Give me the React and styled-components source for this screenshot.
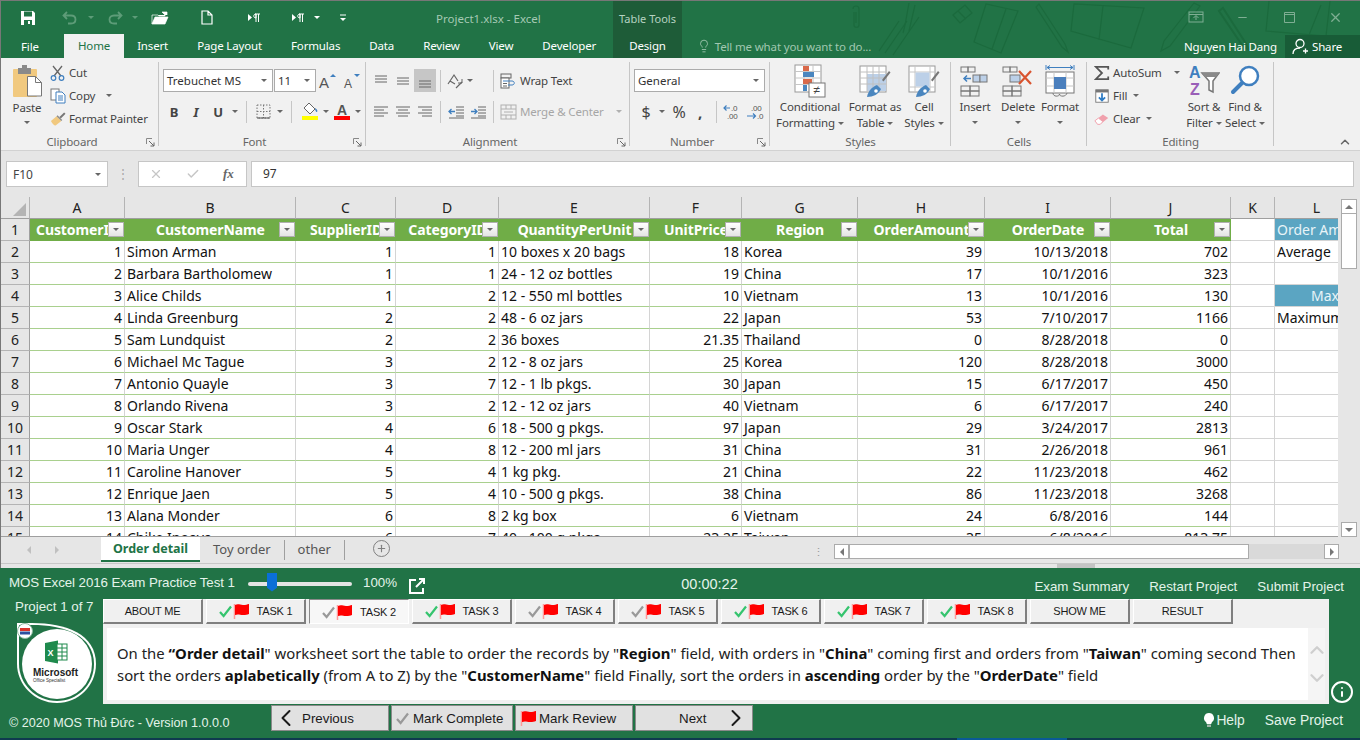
import React from "react";
import styled, { createGlobalStyle, css } from "styled-components";
import { X, Check, Minus, ChevronLeft, ChevronRight, ChevronUp, ChevronDown, Plus, Lightbulb, Info } from "lucide-react";

const UI = `"Noto Sans", "Open Sans", sans-serif`;
const CELL = `"Noto Sans", "Open Sans", sans-serif`;
const APPFONT = `"Liberation Sans", Arial, sans-serif`;

const Global = createGlobalStyle`
  html, body { margin: 0; padding: 0; background: #217346; overflow: hidden; }
  * { box-sizing: border-box; }
`;

const Page = styled.div`
  width: 1360px;
  height: 740px;
  display: flex;
  flex-direction: column;
  overflow: hidden;
  font-family: ${UI};
`;
const Excel = styled.div`
  height: 568px;
  display: flex;
  flex-direction: column;
  border-top: 1px solid #777;
  border-left: 1px solid #777;
  background: #e6e6e6;
`;

/* title bar + tabs */
const Head = styled.header`
  position: relative;
  background: #217346;
  height: 57px;
  flex: none;
`;
const Doodles = styled.svg`
  position: absolute;
  left: 829px;
  top: 0;
  pointer-events: none;
`;
const TitleRow = styled.div`
  height: 33px;
  display: flex;
  align-items: stretch;
  position: relative;
`;
const Quick = styled.div`
  width: 379px;
  display: flex;
  align-items: center;
`;
const QuickBtn = styled.span`
  width: 20px;
  flex: none;
  margin-left: ${(p) => p.$ml}px;
  display: flex;
  justify-content: center;
  align-items: center;
  color: ${(p) => (p.$dim ? "#5d9c78" : "#fff")};
`;
const DocName = styled.div`
  width: 233px;
  padding-left: 56px;
  color: #a5c9b4;
  font-size: 11.5px;
  line-height: 36px;
  white-space: nowrap;
`;
const ContextTitle = styled.div`
  width: 69px;
  background: #1e5c38;
  color: #b5d2c1;
  font-size: 11px;
  line-height: 36px;
  text-align: center;
`;
const WinBtns = styled.div`
  margin-left: auto;
  display: flex;
  align-items: center;
  padding-right: 1px;
  color: #7fae93;
`;
const WinBtn = styled.span`
  width: 46.5px;
  display: flex;
  justify-content: center;
`;
const TabRow = styled.nav`
  height: 24px;
  display: flex;
  align-items: stretch;
  position: relative;
  font-size: 11.5px;
  letter-spacing: -0.15px;
`;
const FileTab = styled.div`
  width: 63px;
  padding-left: 20px;
  color: #fff;
  line-height: 26px;
`;
const RibbonTab = styled.div`
  padding: 0 ${(p) => (p.$active ? 14 : 14.5)}px;
  margin-right: ${(p) => (p.$active ? -1.5 : 0)}px;
  line-height: 24px;
  white-space: nowrap;
  color: ${(p) => (p.$active ? "#217346" : "#fff")};
  background: ${(p) => (p.$active ? "#f1f1f1" : "transparent")};
`;
const ContextTab = styled.div`
  position: absolute;
  left: 612px;
  top: 0;
  bottom: 0;
  width: 69px;
  background: #1e5c38;
  color: #fff;
  line-height: 24px;
  text-align: center;
`;
const TellMe = styled.div`
  display: flex;
  align-items: center;
  gap: 4px;
  margin-left: 86px;
  color: #a0c7b0;
  white-space: nowrap;
`;
const TabRight = styled.div`
  margin-left: auto;
  display: flex;
  align-items: center;
`;
const UserName = styled.span`
  color: #fff;
  margin-right: 8px;
`;
const ShareBtn = styled.div`
  width: 75px;
  height: 23px;
  background: #185c37;
  color: #fff;
  display: flex;
  align-items: center;
  gap: 3px;
  padding-left: 7px;
`;

/* ribbon */
const Ribbon = styled.div`
  height: 93px;
  flex: none;
  display: flex;
  background: #f1f1f1;
  border-bottom: 1px solid #d2d2d2;
  position: relative;
  color: #444;
  font-size: 11.5px;
  letter-spacing: -0.15px;
`;
const Group = styled.section`
  width: ${(p) => p.$w}px;
  flex: none;
  display: flex;
  flex-direction: column;
  position: relative;
  &::after {
    content: "";
    position: absolute;
    right: 0;
    top: 4px;
    bottom: 4px;
    width: 1px;
    background: #c6c6c6;
  }
`;
const GroupBody = styled.div`
  flex: 1;
  min-height: 0;
  display: flex;
`;
const GroupLabel = styled.div`
  height: 16px;
  line-height: 16px;
  text-align: center;
  color: #666;
  padding-right: ${(p) => (p.$launcher ? 16 : 0)}px;
`;
const Launcher = styled.svg`
  position: absolute;
  right: 4px;
  bottom: 3px;
`;
const Caret = styled.i`
  display: inline-block;
  width: 0;
  height: 0;
  border-left: 3px solid transparent;
  border-right: 3px solid transparent;
  border-top: 3px solid ${(p) => p.$c || "#666"};
  margin-left: ${(p) => p.$ml ?? 3}px;
  vertical-align: middle;
  flex: none;
`;
const PasteBtn = styled.div`
  width: 42px;
  margin-left: 5px;
  padding-top: 7px;
  display: flex;
  flex-direction: column;
  align-items: center;
  line-height: 16px;
  & > svg { flex: none; margin-bottom: 2px; }
  & > i { margin-top: 5px; }
`;
const SmallStack = styled.div`
  padding-top: 3px;
  margin-left: ${(p) => p.$ml ?? 2}px;
  width: ${(p) => (p.$w ? `${p.$w}px` : "auto")};
  flex: none;
  display: flex;
  flex-direction: column;
`;
const SmallAction = styled.div`
  height: 23px;
  display: flex;
  align-items: center;
  gap: 3px;
  white-space: nowrap;
  color: ${(p) => (p.$off ? "#a6a6a6" : "inherit")};
  & > svg { flex: none; }
`;
const TwoRows = styled.div`
  padding-top: 11px;
  display: flex;
  flex-direction: column;
  gap: 8px;
  width: 100%;
`;
const ToolRow = styled.div`
  height: 23px;
  display: flex;
  align-items: center;
  padding-left: ${(p) => p.$pl || 0}px;
`;
const FieldBox = styled.div`
  width: ${(p) => p.$w}px;
  height: 23px;
  background: #fff;
  border: 1px solid #ababab;
  margin-right: 1px;
  flex: none;
  display: flex;
  align-items: center;
  justify-content: space-between;
  padding: 0 5px 0 3px;
  letter-spacing: 0;
  color: #333;
  white-space: nowrap;
  overflow: hidden;
`;
const Tool = styled.span`
  width: ${(p) => p.$w || 22}px;
  height: 23px;
  flex: none;
  margin-left: ${(p) => p.$ml || 0}px;
  display: inline-flex;
  align-items: center;
  justify-content: center;
  color: #444;
  background: ${(p) => (p.$on ? "#c6c6c6" : "transparent")};
  font-weight: ${(p) => (p.$bold ? 700 : 400)};
  font-style: ${(p) => (p.$ital ? "italic" : "normal")};
  font-size: ${(p) => p.$fs || 13}px;
`;
const ToolSep = styled.span`
  width: 1px;
  height: 22px;
  background: #c6c6c6;
  flex: none;
  margin-left: ${(p) => p.$l ?? 4}px;
  margin-right: ${(p) => p.$r ?? 4}px;
`;
const BigBtn = styled.div`
  width: ${(p) => p.$w}px;
  margin-left: ${(p) => p.$ml || 0}px;
  flex: none;
  display: flex;
  flex-direction: column;
  align-items: center;
  padding-top: 6px;
  line-height: 16px;
  text-align: center;
  white-space: nowrap;
  & > svg { flex: none; margin-bottom: 1px; }
  & > i { margin-top: 6px; }
`;
const Collapse = styled.span`
  position: absolute;
  right: 8px;
  bottom: 1px;
  color: #666;
  display: flex;
`;

/* formula bar */
const FormulaBar = styled.div`
  height: 46px;
  flex: none;
  display: flex;
  align-items: center;
  padding: 0 5px;
  background: #e6e6e6;
`;
const NameBox = styled.div`
  width: 102px;
  height: 26px;
  background: #fff;
  border: 1px solid #c6c6c6;
  display: flex;
  align-items: center;
  justify-content: space-between;
  padding: 0 6px;
  font-size: 12px;
  color: #444;
`;
const Grip = styled.span`
  width: 30px;
  text-align: center;
  color: #a6a6a6;
  font-size: 12px;
  line-height: 8px;
`;
const FxBox = styled.div`
  width: 109px;
  height: 26px;
  background: #fff;
  border: 1px solid #c6c6c6;
  display: flex;
  align-items: center;
  gap: 23px;
  padding-left: 10px;
  color: #c6c6c6;
`;
const FxGlyph = styled.span`
  font-family: "Liberation Serif", serif;
  font-style: italic;
  font-weight: 700;
  font-size: 13px;
  color: #666;
`;
const FormulaInput = styled.div`
  width: 1103px;
  height: 26px;
  margin-left: 4px;
  background: #fff;
  border: 1px solid #c6c6c6;
  padding-left: 11px;
  line-height: 24px;
  font-size: 12px;
  color: #333;
`;

/* sheet */
const SheetArea = styled.div`
  height: 340px;
  flex: none;
  display: flex;
`;
const Sheet = styled.div`
  width: 1337px;
  overflow: hidden;
  background: #fff;
  border-bottom: 1px solid #9f9f9f;
  font-family: ${CELL};
  font-size: 14px;
  color: #111;
`;
const COLS = "29px 95px 171px 100px 103px 151px 92px 116px 127px 126px 120px 44px 84px";
const Row = styled.div`
  display: grid;
  grid-template-columns: ${COLS};
  height: 22px;
`;
const ColHead = styled.div`
  background: #e6e6e6;
  border-right: 1px solid #b4b4b4;
  border-bottom: 1px solid #9f9f9f;
  text-align: center;
  line-height: 21px;
  color: #222;
  position: relative;
`;
const CornerMark = styled.i`
  position: absolute;
  right: 3px;
  bottom: 2px;
  width: 0;
  height: 0;
  border-left: 13px solid transparent;
  border-bottom: 13px solid #b4b4b4;
`;
const RowHead = styled.div`
  background: #e6e6e6;
  border-right: 1px solid #9f9f9f;
  border-bottom: 1px solid #b4b4b4;
  text-align: center;
  line-height: 21px;
  color: #222;
`;
const Cell = styled.div`
  border-right: 1px solid #d4d4d4;
  border-bottom: 1px solid ${(p) => (p.$plain ? "#d4d4d4" : "#a9d08e")};
  padding: 0 2px;
  line-height: 21px;
  white-space: nowrap;
  overflow: hidden;
  text-align: ${(p) => (p.$num ? "right" : "left")};
`;
const TableHead = styled.div`
  position: relative;
  background: #70ad47;
  color: #fff;
  font-weight: 700;
  letter-spacing: -0.1px;
  line-height: 21px;
  white-space: nowrap;
  overflow: hidden;
  display: flex;
  justify-content: center;
`;
const FilterBtn = styled.span`
  position: absolute;
  right: 1px;
  top: 3px;
  width: 16px;
  height: 15px;
  background: linear-gradient(#fff, #e4e4e4);
  border: 1px solid #b0b0b0;
  display: flex;
  align-items: center;
  justify-content: center;
`;
const NoteHead = styled.div`
  background: #5ba5c2;
  color: #e8f4f8;
  line-height: 21px;
  border-bottom: 1px solid #d4d4d4;
  white-space: nowrap;
  overflow: hidden;
  padding-left: ${(p) => p.$pl || 2}px;
`;
const VScroll = styled.div`
  width: 22px;
  padding: 2px 1px 0 3px;
  display: flex;
  flex-direction: column;
  background: #e6e6e6;
`;
const ScrollArrow = styled.div`
  width: 16px;
  height: 15px;
  background: #fff;
  border: 1px solid #ababab;
  display: flex;
  align-items: center;
  justify-content: center;
  flex: none;
`;
const ScrollThumb = styled.div`
  width: 16px;
  height: 55px;
  background: #fff;
  border: 1px solid #ababab;
  border-top: 0;
`;
const ScrollRest = styled.div`
  flex: 1;
`;
const Triangle = styled.i`
  width: 0;
  height: 0;
  ${(p) => p.$dir === "up" && css`border-left: 4px solid transparent; border-right: 4px solid transparent; border-bottom: 4px solid #777;`}
  ${(p) => p.$dir === "down" && css`border-left: 4px solid transparent; border-right: 4px solid transparent; border-top: 4px solid #777;`}
  ${(p) => p.$dir === "left" && css`border-top: 4px solid transparent; border-bottom: 4px solid transparent; border-right: 4px solid ${p.$c || "#777"};`}
  ${(p) => p.$dir === "right" && css`border-top: 4px solid transparent; border-bottom: 4px solid transparent; border-left: 4px solid ${p.$c || "#777"};`}
`;

/* sheet tabs */
const SheetTabs = styled.div`
  height: 27px;
  flex: none;
  display: flex;
  align-items: flex-start;
  background: #e6e6e6;
  border-bottom: 1px solid #c8c8c8;
  font-size: 13px;
  color: #555;
`;
const TabNav = styled.div`
  width: 100px;
  height: 25px;
  display: flex;
  align-items: center;
  gap: 24px;
  padding-left: 26px;
`;
const ActiveSheet = styled.div`
  width: 99px;
  height: 25px;
  background: #fff;
  border-bottom: 2px solid #217346;
  color: #217346;
  font-weight: 700;
  font-size: 12.5px;
  text-align: center;
  line-height: 23px;
`;
const SheetName = styled.div`
  height: 20px;
  margin-top: 3px;
  padding: 0 13px;
  line-height: 18px;
  border-right: 1px solid #9f9f9f;
`;
const AddSheet = styled.span`
  margin-left: 28px;
  margin-top: 3px;
  width: 17px;
  height: 17px;
  border: 1.5px solid #808080;
  border-radius: 50%;
  display: flex;
  align-items: center;
  justify-content: center;
  color: #808080;
`;
const HScroll = styled.div`
  margin-left: auto;
  width: 537px;
  height: 15px;
  margin-top: 7px;
  margin-right: 21px;
  display: flex;
  align-items: center;
  color: #888;
`;
const SplitDots = styled.span`
  width: 32px;
  text-align: center;
  font-size: 11px;
  line-height: 10px;
  color: #999;
`;
const HArrow = styled.div`
  width: 15px;
  height: 15px;
  background: #fff;
  border: 1px solid #ababab;
  display: flex;
  align-items: center;
  justify-content: center;
  flex: none;
`;
const HThumb = styled.div`
  width: 400px;
  height: 15px;
  background: #fff;
  border: 1px solid #ababab;
`;
const HTrack = styled.div`
  flex: 1;
  height: 15px;
  background: #d9d9d9;
`;
const SplitBar = styled.div`
  height: 4px;
  flex: none;
  background: #e6e6e6;
  display: flex;
  justify-content: flex-end;
  padding-right: 265px;
`;
const SplitHandle = styled.span`
  width: 38px;
  background: #c4c4c4;
`;

/* exam panel */
const Exam = styled.div`
  flex: 1;
  background: #217346;
  display: flex;
  flex-direction: column;
  color: #e4f3ea;
  font-family: ${APPFONT};
  font-size: 13.33px;
`;
const ExamTop = styled.div`
  height: 31px;
  flex: none;
  display: flex;
  align-items: center;
`;
const ExamTitle = styled.div`
  width: 248px;
  padding: 0 0 3px 9px;
  letter-spacing: -0.08px;
  white-space: nowrap;
`;
const Slider = styled.div`
  position: relative;
  width: 104px;
  height: 4px;
  background: #e4e4e4;
  border-radius: 2px;
`;
const SliderThumb = styled.span`
  position: absolute;
  left: 19px;
  top: -9px;
  width: 10px;
  height: 19px;
  background: #0a6fd8;
  clip-path: polygon(0 0, 100% 0, 100% 80%, 50% 100%, 0 80%);
`;
const Percent = styled.span`
  margin-left: 11px;
  width: 45px;
  padding-bottom: 3px;
`;
const PopOut = styled.svg`
  flex: none;
  margin-top: 4px;
`;
const Timer = styled.div`
  width: 567px;
  text-align: center;
  font-size: 14.5px;
`;
const ExamLinks = styled.div`
  margin-left: auto;
  display: flex;
  gap: 20px;
  padding-right: 16px;
  padding-top: 5px;
  white-space: nowrap;
`;
const ExamMain = styled.div`
  height: 105px;
  flex: none;
  display: flex;
`;
const LeftCol = styled.div`
  width: 103px;
  flex: none;
  padding-left: 15px;
  white-space: nowrap;
  line-height: 16px;
  & > svg { display: block; margin: 7px 0 0 1px; }
`;
const Panel = styled.div`
  width: 1226px;
  flex: none;
  background: #f0f0f0;
`;
const TaskRow = styled.div`
  display: flex;
  gap: 3px;
  height: 25px;
`;
const TaskBtn = styled.div`
  width: 100px;
  height: 25px;
  display: flex;
  align-items: center;
  justify-content: center;
  gap: ${(p) => (p.$icons ? 4 : 0)}px;
  font-size: 11px;
  letter-spacing: -0.2px;
  color: #1a1a1a;
  background: ${(p) => (p.$current ? "#f7f7f7" : "#f0f0f0")};
  border: 1px solid;
  border-color: #fff #7f7f7f #7f7f7f #fff;
  border-bottom-width: 2px;
  border-right-width: 2px;
  ${(p) => p.$current && css`
    border-color: #8a8a8a #fff #fff #8a8a8a;
    border-width: 1px;
    padding-top: 1px;
  `}
`;
const TaskIcons = styled.span`
  display: flex;
  align-items: center;
  gap: 1px;
  margin-right: 2px;
`;
const MsgWrap = styled.div`
  display: flex;
  margin: 4px 0 0 4px;
  height: 72px;
`;
const Msg = styled.div`
  width: 1201px;
  background: #fff;
  padding: 14px 0 0 10px;
  font-family: ${UI};
  font-size: 14.88px;
  line-height: 22px;
  color: #222;
  white-space: nowrap;
  b { font-weight: 700; color: #111; }
`;
const MsgScroll = styled.div`
  width: 17px;
  background: #f5f5f5;
  display: flex;
  flex-direction: column;
  align-items: center;
  padding-top: 11px;
  gap: 6px;
  color: #cfcfcf;
  & > svg { flex: none; }
`;
const InfoCol = styled.div`
  flex: 1;
  display: flex;
  align-items: flex-end;
  justify-content: center;
  padding-right: 5px;
  color: #fff;
`;
const ExamFoot = styled.div`
  height: 34px;
  flex: none;
  display: flex;
`;
const Copyright = styled.div`
  width: 271px;
  padding: 12px 0 0 9px;
  font-size: 12.6px;
  white-space: nowrap;
`;
const NavBtn = styled.div`
  width: ${(p) => p.$w}px;
  height: 26px;
  margin-top: 1px;
  margin-right: 2px;
  flex: none;
  display: flex;
  align-items: center;
  gap: ${(p) => p.$gap ?? 2}px;
  padding-left: ${(p) => p.$pl ?? 2}px;
  background: #e1e1e1;
  border: 1px solid #8a8a8a;
  color: #1a1a1a;
  white-space: nowrap;
  & > svg { flex: none; }
`;
const FootRight = styled.div`
  margin-left: auto;
  display: flex;
  gap: 20px;
  align-items: center;
  padding: 0 17px 2px 0;
  font-size: 13.8px;
  white-space: nowrap;
`;
const HelpLink = styled.span`
  display: flex;
  align-items: center;
  gap: 1px;
`;
const Strip = styled.div`
  height: 2px;
  flex: none;
  background: #0f3a4f;
  padding-left: 957px;
`;
const StripLit = styled.div`
  width: 110px;
  height: 2px;
  background: #0a5a96;
`;

/* drawn icons */
const Tiny = ({ w = 16, h = 16, vb, children, ...r }) => (
  <svg width={w} height={h} viewBox={vb || `0 0 ${w} ${h}`} fill="none" {...r}>{children}</svg>
);
const Flag = () => (
  <Tiny w={18} h={17}>
    <path d="M1.5 1v15" stroke="#ff9a9a" strokeWidth="1.5" />
    <path d="M2 2c3-1.6 5 0 8 0s4-.6 6-1v10c-2 .6-3 1-6 1s-5-1.4-8 0z" fill="#f00" />
  </Tiny>
);
const Tick = ({ grey }) => (
  <Tiny w={13} h={13}>
    <path d="M1 7l3.6 4L12 1.5" stroke={grey ? "#999" : "#35c46e"} strokeWidth="2.2" />
  </Tiny>
);
const PasteIcon = () => (
  <Tiny w={30} h={33}>
    <rect x="1" y="4" width="24" height="28" rx="1" fill="#f1c97f" />
    <rect x="6" y="3" width="13" height="6" fill="#8a8a8a" />
    <rect x="10" y="0" width="5" height="5" fill="#8a8a8a" />
    <path d="M15.5 11.5h8l6 6v13.5h-14z" fill="#fff" stroke="#777" />
    <path d="M23.5 11.5v6h6" stroke="#777" />
  </Tiny>
);
const CutIcon = () => (
  <Tiny w={16} h={16}>
    <path d="M3 1l8 10M12 1L4 11" stroke="#666" strokeWidth="1.3" />
    <circle cx="3.5" cy="13" r="2.3" stroke="#3f7fbf" strokeWidth="1.2" />
    <circle cx="11.5" cy="13" r="2.3" stroke="#3f7fbf" strokeWidth="1.2" />
  </Tiny>
);
const CopyIcon = () => (
  <Tiny w={16} h={16}>
    <rect x="1" y="1" width="8" height="11" fill="#fff" stroke="#777" />
    <path d="M6 4h6l3 3v8H6z" fill="#fff" stroke="#3f7fbf" />
    <path d="M8 8h5M8 10h5M8 12h5" stroke="#3f7fbf" />
  </Tiny>
);
const BrushIcon = () => (
  <Tiny w={16} h={16} vb="0 0 17 16">
    <path d="M1 10l6-5 5 5-6 5c-2-.2-4-3-5-5z" fill="#f1c97f" />
    <path d="M7 5l5 5 1-1-5-5z" fill="#8a8a8a" />
    <path d="M10 6l5-5 1.5 1.5-5 5z" fill="#777" />
  </Tiny>
);
const Lines = ({ rows }) => (
  <Tiny w={16} h={16}>
    {rows.map((r, i) => (
      <path key={i} d={`M${r[0]} ${r[2]}H${r[1]}`} stroke="#666" />
    ))}
  </Tiny>
);
const FillIcon = () => (
  <Tiny w={18} h={19}>
    <path d="M8 1l6 6-5 5-6-6z" fill="#fff" stroke="#666" />
    <path d="M14 6c2 1 3 3 2 4-1 .5-2-2-2-4z" fill="#3f7fbf" />
    <rect x="1" y="14" width="16" height="4" fill="#ff0" />
  </Tiny>
);
const FontColorIcon = () => (
  <Tiny w={16} h={19}>
    <text x="3" y="12.5" fontSize="14" fontFamily="Liberation Sans" fontWeight="700" fill="#555">A</text>
    <rect x="0" y="14" width="16" height="4" fill="#f00" />
  </Tiny>
);
const BorderIcon = () => (
  <Tiny w={15} h={15}>
    <path d="M1 1h13v13H1z" stroke="#777" strokeDasharray="1.5 1.5" />
    <path d="M7.5 1v13M1 7.5h13" stroke="#777" strokeDasharray="1.5 1.5" />
    <path d="M1 14h13" stroke="#555" />
  </Tiny>
);
const GrowA = ({ up }) => (
  <Tiny w={20} h={18}>
    <text x="1" y="16" fontSize={up ? 15 : 12} fontFamily="Liberation Sans" fill="#555">A</text>
    <path d={up ? "M12 5l3-3 3 3z" : "M11 2h6l-3 3z"} fill="#3f7fbf" />
  </Tiny>
);
const Orient = () => (
  <Tiny w={18} h={16}>
    <path d="M2 11L8 2l4 6M4 8l5 3M10 15l6-6" stroke="#666" strokeWidth="1.2" />
    <path d="M16 6v4h-4" stroke="#666" />
  </Tiny>
);
const Indent = ({ out }) => (
  <Tiny w={17} h={14}>
    <path d="M8 2h8M8 5h8M8 8h8M8 11h8M1 13h15" stroke="#666" />
    <path d={out ? "M1 6.5h6M3.5 4L1 6.5 3.5 9" : "M1 6.5h6M4.5 4L7 6.5 4.5 9"} stroke="#3f7fbf" strokeWidth="1.3" />
  </Tiny>
);
const WrapIcon = () => (
  <Tiny w={17} h={16}>
    <rect x="1" y="1" width="10" height="4" stroke="#666" />
    <rect x="1" y="5" width="8" height="10" fill="#fff" stroke="#666" />
    <path d="M3 8h9c3 0 3 4 0 4H8" stroke="#3f7fbf" />
    <path d="M3 10.5h4M3 13h4" stroke="#666" />
  </Tiny>
);
const MergeIcon = () => (
  <Tiny w={17} h={16}>
    <rect x="1" y="1" width="15" height="14" stroke="#b0b0b0" />
    <path d="M1 5h15M1 11h15M6 1v4M11 1v4M6 11v4M11 11v4M4 8h9" stroke="#b0b0b0" />
  </Tiny>
);
const DecDown = ({ inc }) => (
  <Tiny w={20} h={18}>
    <text x={inc ? 5 : 8} y="7.5" fontSize="8" fontFamily="Liberation Sans" fill="#555">{inc ? ".00" : ".0"}</text>
    <text x={inc ? 11 : 4} y="16" fontSize="8" fontFamily="Liberation Sans" fill="#555">{inc ? ".0" : ".00"}</text>
    <path d={inc ? "M1 13h8M7 10.5L9.5 13 7 15.5" : "M1 5h6M3.5 2.5L1 5l2.5 2.5"} stroke="#3f7fbf" strokeWidth="1.2" />
  </Tiny>
);
const CondIcon = () => (
  <Tiny w={32} h={34}>
    <rect x="1" y="1" width="26" height="27" fill="#fff" stroke="#999" />
    <path d="M1 7.5h26M1 14h26M1 20.5h26M10 1v27M19 1v27" stroke="#c6c6c6" />
    <rect x="9" y="2" width="6" height="5" fill="#d9694a" />
    <rect x="9" y="8" width="11" height="5" fill="#4a86bf" />
    <rect x="9" y="15" width="9" height="5" fill="#d9694a" />
    <rect x="9" y="21" width="4" height="6" fill="#4a86bf" />
    <rect x="15" y="19" width="16" height="14" fill="#fff" stroke="#777" />
    <text x="19.5" y="30" fontSize="12" fontFamily="Liberation Sans" fill="#444">≠</text>
  </Tiny>
);
const TableIcon = ({ plain }) => (
  <Tiny w={32} h={34}>
    <rect x="1" y="2" width="26" height="26" fill="#fff" stroke="#999" />
    {plain ? (
      <>
        <path d="M1 8h26M1 23h26M7 2v26M22 2v26" stroke="#c6c6c6" />
        <rect x="7.5" y="8.5" width="14" height="14" fill="#bcd0e8" />
      </>
    ) : (
      <>
        <rect x="8" y="10" width="19" height="17" fill="#bcd0e8" />
        <path d="M1 8h26M1 14h26M1 20h26M8 2v26M14 2v26M20 2v26" stroke="#c0c0c0" />
      </>
    )}
    <path d="M23 16l7-9 1.500 1.500-7 9z" fill="#777" />
    <path d="M8 33c1-6 5-10 10-12l4 4c-2 5-8 8-14 8z" fill="#4a86bf" />
    <circle cx="17" cy="27" r="1.8" fill="#fff" />
  </Tiny>
);
const CellGrid = () => (
  <>
    <rect x="1" y="22" width="9" height="5" stroke="#777" />
    <rect x="10" y="22" width="9" height="5" stroke="#777" />
    <rect x="1" y="27" width="9" height="5" stroke="#777" />
    <rect x="10" y="27" width="9" height="5" stroke="#777" />
  </>
);
const InsertIcon = () => (
  <Tiny w={30} h={34}>
    <rect x="1" y="3" width="7" height="5" stroke="#777" />
    <rect x="8" y="3" width="7" height="5" stroke="#777" />
    <CellGrid />
    <rect x="13" y="11" width="7" height="7" fill="#bcd0e8" stroke="#777" />
    <rect x="20" y="11" width="7" height="7" fill="#bcd0e8" stroke="#777" />
    <path d="M4 14.5h7M7 11.5l-3 3 3 3" stroke="#3f7fbf" strokeWidth="1.5" />
  </Tiny>
);
const DeleteIcon = () => (
  <Tiny w={32} h={34}>
    <rect x="1" y="3" width="7" height="5" stroke="#777" />
    <rect x="8" y="3" width="7" height="5" stroke="#777" />
    <CellGrid />
    <rect x="8" y="11" width="10" height="7" fill="#bcd0e8" stroke="#777" />
    <path d="M17 7l12 13M29 7L17 20" stroke="#d9542f" strokeWidth="2.2" />
  </Tiny>
);
const FormatIcon = () => (
  <Tiny w={30} h={34}>
    <path d="M1 1v5M29 1v5M2 3.5h26M2 3.5l3-2M2 3.5l3 2M28 3.5l-3-2M28 3.5l-3 2" stroke="#3f7fbf" />
    <rect x="1" y="8" width="28" height="21" fill="#fff" stroke="#777" />
    <path d="M1 14h28M1 22h28M9 8v21M21 8v21" stroke="#c6c6c6" />
    <rect x="9" y="13" width="12" height="12" fill="#4a7fbd" />
    <path d="M8 29c0 4 6 4 7 1M14 30c1 3 7 3 8-1" stroke="#777" />
  </Tiny>
);
const SumIcon = () => (
  <Tiny w={16} h={16} vb="0 0 18 16">
    <path d="M16 4V1H2l7 7-7 7h14v-3" stroke="#555" strokeWidth="2" />
  </Tiny>
);
const FillDown = () => (
  <Tiny w={16} h={16} vb="0 0 18 16">
    <rect x="2" y="1" width="14" height="14" fill="#fff" stroke="#777" />
    <rect x="2" y="1" width="14" height="3" fill="#777" />
    <path d="M9 5v8M5.5 9.5L9 13l3.500-3.500" stroke="#2f7cc4" strokeWidth="2" />
  </Tiny>
);
const EraserIcon = () => (
  <Tiny w={16} h={16} vb="0 0 18 16">
    <path d="M1 10l9-7 6 4-9 7H4z" fill="#f0a0ac" />
    <path d="M1 10l3 4h3l3-3-5-4z" fill="#fff" stroke="#f0a0ac" />
  </Tiny>
);
const SortIcon = () => (
  <Tiny w={32} h={34}>
    <text x="1" y="14" fontSize="16" fontWeight="700" fontFamily="Liberation Sans" fill="#3f7fbf">A</text>
    <text x="2" y="31" fontSize="16" fontWeight="700" fontFamily="Liberation Sans" fill="#9a5fb8">Z</text>
    <path d="M14 9h17l-6 8v11l-4-2v-9z" fill="#fff" stroke="#777" strokeWidth="1.5" />
    <path d="M14 9h17l-3 4H17z" fill="#8a8a8a" />
  </Tiny>
);
const FindIcon = () => (
  <Tiny w={30} h={34}>
    <circle cx="19" cy="12" r="9" fill="#fff" stroke="#3f7fbf" strokeWidth="2.5" />
    <path d="M12 19L3 28" stroke="#3f7fbf" strokeWidth="4" strokeLinecap="round" />
  </Tiny>
);
const LauncherIcon = () => (
  <Launcher width="9" height="9" viewBox="0 0 9 9" fill="none">
    <path d="M.5 6V.5H6" stroke="#888" />
    <path d="M3 3l5 5M8 4.5V8H4.500" stroke="#666" />
  </Launcher>
);
const HelpBulb = () => (
  <Tiny w={12} h={16}>
    <path d="M6 1a5 5 0 0 1 3 9l-.8 2H3.800L3 10A5 5 0 0 1 6 1z" fill="#fff" />
    <rect x="4" y="12.5" width="4" height="2.5" fill="#9fb5a8" />
  </Tiny>
);

const MosLogo = () => (
  <svg width="81" height="82" viewBox="0 0 81 82">
    <path d="M1 1h15C50 1 80 12 80 42c0 22-18 39-39 39C18 81 1 62 1 42z" fill="#fff" />
    <path d="M3 3h13c32 0 62 10 62 39 0 21-17 37-37 37C20 79 3 62 3 42z" fill="#217346" />
    <circle cx="41" cy="42" r="35" fill="#fff" />
    <circle cx="9" cy="9" r="7.5" fill="#fff" stroke="#8ab89e" />
    <rect x="4" y="6" width="10" height="3" fill="#d9342a" />
    <rect x="4" y="9.5" width="10" height="3" fill="#2d4f9e" />
    <path d="M29 21l13-2.500v23L29 39z" fill="#1f8a4d" />
    <rect x="41" y="22" width="10" height="16" fill="#fff" stroke="#1f8a4d" />
    <path d="M41 26h10M41 30h10M41 34h10M46 22v16" stroke="#1f8a4d" />
    <text x="31.5" y="34" fontSize="9" fontWeight="700" fontFamily="Liberation Sans" fill="#fff">X</text>
    <text x="17" y="54" fontSize="10" fontWeight="700" fontFamily="Liberation Sans" fill="#222">Microsoft</text>
    <text x="17" y="60" fontSize="4.5" fontFamily="Liberation Sans" fill="#333">Office Specialist</text>
  </svg>
);

const rows = [
  [1, "Simon Arman", 1, 1, "10 boxes x 20 bags", 18, "Korea", 39, "10/13/2018", 702],
  [2, "Barbara Bartholomew", 1, 1, "24 - 12 oz bottles", 19, "China", 17, "10/1/2016", 323],
  [3, "Alice Childs", 1, 2, "12 - 550 ml bottles", 10, "Vietnam", 13, "10/1/2016", 130],
  [4, "Linda Greenburg", 2, 2, "48 - 6 oz jars", 22, "Japan", 53, "7/10/2017", 1166],
  [5, "Sam Lundquist", 2, 2, "36 boxes", 21.35, "Thailand", 0, "8/28/2018", 0],
  [6, "Michael Mc Tague", 3, 2, "12 - 8 oz jars", 25, "Korea", 120, "8/28/2018", 3000],
  [7, "Antonio Quayle", 3, 7, "12 - 1 lb pkgs.", 30, "Japan", 15, "6/17/2017", 450],
  [8, "Orlando Rivena", 3, 2, "12 - 12 oz jars", 40, "Vietnam", 6, "6/17/2017", 240],
  [9, "Oscar Stark", 4, 6, "18 - 500 g pkgs.", 97, "Japan", 29, "3/24/2017", 2813],
  [10, "Maria Unger", 4, 8, "12 - 200 ml jars", 31, "China", 31, "2/26/2018", 961],
  [11, "Caroline Hanover", 5, 4, "1 kg pkg.", 21, "China", 22, "11/23/2018", 462],
  [12, "Enrique Jaen", 5, 4, "10 - 500 g pkgs.", 38, "China", 86, "11/23/2018", 3268],
  [13, "Alana Monder", 6, 8, "2 kg box", 6, "Vietnam", 24, "6/8/2016", 144],
  [14, "Chike Inoaya", 6, 7, "40 - 100 g pkgs.", 23.25, "Taiwan", 35, "6/8/2016", 813.75],
];
const fields = ["CustomerID", "CustomerName", "SupplierID", "CategoryID", "QuantityPerUnit", "UnitPrice", "Region", "OrderAmount", "OrderDate", "Total"];
const letters = "ABCDEFGHIJKL".split("");
const textCols = [1, 4, 6];

const notes = {
  2: ["Average", false],
  3: ["", false],
  4: ["Max", true],
  5: ["Maximum", false],
};

const tasks = [
  ["TASK 1", false], ["TASK 2", true], ["TASK 3", false], ["TASK 4", true],
  ["TASK 5", true], ["TASK 6", false], ["TASK 7", false], ["TASK 8", false],
];

const BG = () => (
  <Doodles width="531" height="57" viewBox="829 0 531 57" fill="none" stroke="#1b6a3d" strokeWidth="1.2">
    <path d="M852 8c0-4 6-4 6 0v16c0 3-5 3-5 0V11M855 11v11" />
    <path d="M878 50l20-30M884 52l22-32M892 54l26-38" />
    <path d="M908 2l-4 22-2 8M914 4l-6 26" />
    <path d="M952 14l12-10 7 8-12 10zM957 10l8 8" />
    <path d="M985 3l-12 38 27 11 17-42zM1005 8l-14 40" />
    <path d="M1038 3l26 40 3 8-6-5-26-40z" />
    <path d="M1073 3l-3 27 60 17 13-40zM1102 5l-4 34" />
    <path d="M1193 2l-30 38-3 10 9-5 30-40z" />
    <path d="M1222 7l22 34 4 8-7-5-23-34z" strokeWidth="2" />
    <path d="M1268 0l-3 30 60 5 4-35M1320 4l-16 40" />
  </Doodles>
);

export default function App() {
  return (
    <Page>
      <Global />
      <Excel>
        <Head>
          <BG />
          <TitleRow>
            <Quick>
              <QuickBtn $ml={17}>
                <Tiny w={16} h={16}>
                  <path d="M1 1h12l2 2v12H1z" fill="#fff" />
                  <rect x="4" y="1.5" width="8" height="5" fill="#217346" />
                  <rect x="4" y="10" width="8" height="5" fill="#217346" />
                  <rect x="8" y="11" width="2" height="3" fill="#fff" />
                </Tiny>
              </QuickBtn>
              <QuickBtn $ml={22} $dim>
                <Tiny w={16} h={14}>
                  <path d="M5 1L1.500 4.500 5 8M2 4.500h7c6 0 6 8 0 8H6" stroke="currentColor" strokeWidth="1.8" />
                </Tiny>
              </QuickBtn>
              <QuickBtn $ml={-1}><Caret $c="#5d9c78" /></QuickBtn>
              <QuickBtn $ml={6} $dim>
                <Tiny w={16} h={14}>
                  <path d="M11 1l3.500 3.500L11 8M14 4.500H7c-6 0-6 8 0 8h3" stroke="currentColor" strokeWidth="1.8" />
                </Tiny>
              </QuickBtn>
              <QuickBtn $ml={-2}><Caret $c="#5d9c78" /></QuickBtn>
              <QuickBtn $ml={7}>
                <Tiny w={18} h={14}>
                  <path d="M1 4h6l1 1h6v-1l-3-3h5v3M1 4v9h13l3-7H4l-3 7" fill="#fff" stroke="#fff" strokeWidth=".7" />
                </Tiny>
              </QuickBtn>
              <QuickBtn $ml={27}>
                <Tiny w={12} h={15}>
                  <path d="M1 1h6l4 4v9H1zM7 1v4h4" stroke="#fff" strokeWidth="1.2" />
                </Tiny>
              </QuickBtn>
              <QuickBtn $ml={27}>
                <Tiny w={12} h={10}>
                  <path d="M0 1l4 3.500L0 8z" fill="#fff" />
                  <path d="M8 1c-3 0-3 4 0 4zM8 1v8M10.500 1v8M7 1h5" stroke="#fff" />
                </Tiny>
              </QuickBtn>
              <QuickBtn $ml={24}>
                <Tiny w={12} h={10}>
                  <path d="M0 1l4 3.500L0 8z" fill="#fff" />
                  <path d="M8 1c-3 0-3 4 0 4zM8 1v8M10.500 1v8M7 1h5" stroke="#fff" />
                </Tiny>
              </QuickBtn>
              <QuickBtn $ml={-3}><Caret $c="#fff" /></QuickBtn>
              <QuickBtn $ml={8}>
                <Tiny w={8} h={8}>
                  <path d="M1 1h6" stroke="#fff" />
                  <path d="M1 4h6L4 7z" fill="#fff" />
                </Tiny>
              </QuickBtn>
            </Quick>
            <DocName>Project1.xlsx - Excel</DocName>
            <ContextTitle>Table Tools</ContextTitle>
            <WinBtns>
              <WinBtn>
                <Tiny w={16} h={13}>
                  <rect x="1" y="1" width="14" height="10" stroke="currentColor" />
                  <path d="M1 3.500h14" stroke="currentColor" />
                  <path d="M8 9V5M5.500 7L8 4.500 10.500 7" stroke="currentColor" />
                </Tiny>
              </WinBtn>
              <WinBtn><Minus size={13} strokeWidth={2} /></WinBtn>
              <WinBtn>
                <Tiny w={11} h={11}>
                  <path d="M.5 .5h10v10H.5zM.5 2.500h10" stroke="currentColor" />
                </Tiny>
              </WinBtn>
              <WinBtn><X size={15} strokeWidth={2} /></WinBtn>
            </WinBtns>
          </TitleRow>
          <TabRow>
            <FileTab>File</FileTab>
            <RibbonTab $active>Home</RibbonTab>
            <RibbonTab>Insert</RibbonTab>
            <RibbonTab>Page Layout</RibbonTab>
            <RibbonTab>Formulas</RibbonTab>
            <RibbonTab>Data</RibbonTab>
            <RibbonTab>Review</RibbonTab>
            <RibbonTab>View</RibbonTab>
            <RibbonTab>Developer</RibbonTab>
            <ContextTab>Design</ContextTab>
            <TellMe><Lightbulb size={14} strokeWidth={1.5} />Tell me what you want to do...</TellMe>
            <TabRight>
              <UserName>Nguyen Hai Dang</UserName>
              <ShareBtn>
                <Tiny w={17} h={17}>
                  <circle cx="8" cy="5.5" r="4" stroke="#fff" strokeWidth="1.3" />
                  <path d="M1 16c0-4 3-6 7-6M11 13h5M13.500 10.500v5" stroke="#fff" strokeWidth="1.3" />
                </Tiny>
                Share
              </ShareBtn>
            </TabRight>
          </TabRow>
        </Head>

        <Ribbon>
          <Group $w={158}>
            <GroupBody>
              <PasteBtn>
                <PasteIcon />
                Paste
                <Caret $ml={0} />
              </PasteBtn>
              <SmallStack>
                <SmallAction><CutIcon />Cut</SmallAction>
                <SmallAction><CopyIcon />Copy<Caret $ml={8} /></SmallAction>
                <SmallAction><BrushIcon />Format Painter</SmallAction>
              </SmallStack>
            </GroupBody>
            <GroupLabel $launcher>Clipboard</GroupLabel>
            <LauncherIcon />
          </Group>

          <Group $w={207}>
            <GroupBody>
              <TwoRows>
                <ToolRow $pl={4}>
                  <FieldBox $w={110}>Trebuchet MS<Caret /></FieldBox>
                  <FieldBox $w={42}>11<Caret /></FieldBox>
                  <Tool $w={22}><GrowA up /></Tool>
                  <Tool $w={22} $ml={3}><GrowA /></Tool>
                </ToolRow>
                <ToolRow $pl={4}>
                  <Tool $bold>B</Tool>
                  <Tool $ital $bold>I</Tool>
                  <Tool $bold>U</Tool>
                  <Caret $ml={3} />
                  <ToolSep $l={8} $r={8} />
                  <Tool $w={20} $ml={-2}><BorderIcon /></Tool>
                  <Caret $ml={4} />
                  <ToolSep $l={8} $r={8} />
                  <Tool $w={20}><FillIcon /></Tool>
                  <Caret $ml={3} />
                  <Tool $w={20} $ml={3}><FontColorIcon /></Tool>
                  <Caret $ml={3} />
                </ToolRow>
              </TwoRows>
            </GroupBody>
            <GroupLabel $launcher>Font</GroupLabel>
            <LauncherIcon />
          </Group>

          <Group $w={264}>
            <GroupBody>
              <TwoRows>
                <ToolRow $pl={4}>
                  <Tool><Lines rows={[[2, 14, 3], [2, 14, 6], [2, 14, 9]]} /></Tool>
                  <Tool><Lines rows={[[2, 14, 5], [2, 14, 8], [2, 14, 11]]} /></Tool>
                  <Tool $on><Lines rows={[[2, 14, 8], [2, 14, 11], [2, 14, 14]]} /></Tool>
                  <ToolSep />
                  <Tool $w={20}><Orient /></Tool>
                  <Caret $ml={2} />
                  <ToolSep $l={20} $r={6} />
                  <SmallAction><WrapIcon />Wrap Text</SmallAction>
                </ToolRow>
                <ToolRow $pl={4}>
                  <Tool><Lines rows={[[1, 15, 3], [1, 11, 6], [1, 15, 9], [1, 11, 12]]} /></Tool>
                  <Tool><Lines rows={[[1, 15, 3], [3, 13, 6], [1, 15, 9], [3, 13, 12]]} /></Tool>
                  <Tool><Lines rows={[[1, 15, 3], [5, 15, 6], [1, 15, 9], [5, 15, 12]]} /></Tool>
                  <ToolSep />
                  <Tool><Indent out /></Tool>
                  <Tool><Indent /></Tool>
                  <ToolSep $r={6} />
                  <SmallAction $off><MergeIcon />Merge &amp; Center<Caret $ml={9} $c="#b0b0b0" /></SmallAction>
                </ToolRow>
              </TwoRows>
            </GroupBody>
            <GroupLabel $launcher>Alignment</GroupLabel>
            <LauncherIcon />
          </Group>

          <Group $w={140}>
            <GroupBody>
              <TwoRows>
                <ToolRow $pl={4}>
                  <FieldBox $w={131}>General<Caret /></FieldBox>
                </ToolRow>
                <ToolRow $pl={5}>
                  <Tool $fs={16}>$</Tool>
                  <Caret $ml={2} />
                  <Tool $w={22} $fs={16} $ml={3}>%</Tool>
                  <Tool $w={20} $fs={15} $bold>,</Tool>
                  <ToolSep $l={6} $r={6} />
                  <Tool $ml={-1}><DecDown /></Tool>
                  <Tool $ml={1}><DecDown inc /></Tool>
                </ToolRow>
              </TwoRows>
            </GroupBody>
            <GroupLabel $launcher>Number</GroupLabel>
            <LauncherIcon />
          </Group>

          <Group $w={181}>
            <GroupBody>
              <BigBtn $w={72} $ml={4}>
                <CondIcon />
                Conditional
                <span>Formatting<Caret /></span>
              </BigBtn>
              <BigBtn $w={58}>
                <TableIcon />
                Format as
                <span>Table<Caret /></span>
              </BigBtn>
              <BigBtn $w={40}>
                <TableIcon plain />
                Cell
                <span>Styles<Caret /></span>
              </BigBtn>
            </GroupBody>
            <GroupLabel>Styles</GroupLabel>
          </Group>

          <Group $w={136}>
            <GroupBody>
              <BigBtn $w={44} $ml={2}>
                <InsertIcon />
                Insert
                <Caret $ml={0} />
              </BigBtn>
              <BigBtn $w={42}>
                <DeleteIcon />
                Delete
                <Caret $ml={0} />
              </BigBtn>
              <BigBtn $w={42}>
                <FormatIcon />
                Format
                <Caret $ml={0} />
              </BigBtn>
            </GroupBody>
            <GroupLabel>Cells</GroupLabel>
          </Group>

          <Group $w={187}>
            <GroupBody>
              <SmallStack $ml={7} $w={90}>
                <SmallAction><SumIcon />AutoSum<Caret $ml={9} /></SmallAction>
                <SmallAction><FillDown />Fill<Caret /></SmallAction>
                <SmallAction><EraserIcon />Clear<Caret /></SmallAction>
              </SmallStack>
              <BigBtn $w={40}>
                <SortIcon />
                Sort &amp;
                <span>Filter<Caret /></span>
              </BigBtn>
              <BigBtn $w={42}>
                <FindIcon />
                Find &amp;
                <span>Select<Caret /></span>
              </BigBtn>
            </GroupBody>
            <GroupLabel>Editing</GroupLabel>
          </Group>
          <Collapse><ChevronUp size={14} strokeWidth={2.5} /></Collapse>
        </Ribbon>

        <FormulaBar>
          <NameBox>F10<Caret /></NameBox>
          <Grip>⋮</Grip>
          <FxBox>
            <X size={14} />
            <Check size={14} strokeWidth={2.5} />
            <FxGlyph>fx</FxGlyph>
          </FxBox>
          <FormulaInput>97</FormulaInput>
        </FormulaBar>

        <SheetArea>
          <Sheet>
            <Row>
              <ColHead><CornerMark /></ColHead>
              {letters.map((l) => <ColHead key={l}>{l}</ColHead>)}
            </Row>
            <Row>
              <RowHead>1</RowHead>
              {fields.map((f) => (
                <TableHead key={f}>
                  {f}
                  <FilterBtn><Caret $ml={0} $c="#666" /></FilterBtn>
                </TableHead>
              ))}
              <Cell $plain />
              <NoteHead>Order Amount</NoteHead>
            </Row>
            {rows.map((r, i) => (
              <Row key={r[0]}>
                <RowHead>{i + 2}</RowHead>
                {r.map((v, j) => (
                  <Cell key={j} $num={!textCols.includes(j)}>{v}</Cell>
                ))}
                <Cell $plain />
                {notes[i + 2] && notes[i + 2][1] ? (
                  <NoteHead $pl={36}>{notes[i + 2][0]}</NoteHead>
                ) : (
                  <Cell $plain>{notes[i + 2] ? notes[i + 2][0] : ""}</Cell>
                )}
              </Row>
            ))}
          </Sheet>
          <VScroll>
            <ScrollArrow><Triangle $dir="up" /></ScrollArrow>
            <ScrollThumb />
            <ScrollRest />
            <ScrollArrow><Triangle $dir="down" /></ScrollArrow>
          </VScroll>
        </SheetArea>

        <SheetTabs>
          <TabNav>
            <Triangle $dir="left" $c="#c0c0c0" />
            <Triangle $dir="right" $c="#c0c0c0" />
          </TabNav>
          <ActiveSheet>Order detail</ActiveSheet>
          <SheetName>Toy order</SheetName>
          <SheetName>other</SheetName>
          <AddSheet><Plus size={11} strokeWidth={2.5} /></AddSheet>
          <HScroll>
            <SplitDots>⋮</SplitDots>
            <HArrow><Triangle $dir="left" /></HArrow>
            <HThumb />
            <HTrack />
            <HArrow><Triangle $dir="right" /></HArrow>
          </HScroll>
        </SheetTabs>
        <SplitBar><SplitHandle /></SplitBar>
      </Excel>

      <Exam>
        <ExamTop>
          <ExamTitle>MOS Excel 2016 Exam Practice Test 1</ExamTitle>
          <Slider><SliderThumb /></Slider>
          <Percent>100%</Percent>
          <PopOut width="18" height="18" viewBox="0 0 18 18" fill="none" stroke="#fff" strokeWidth="2">
            <path d="M8 3H2v13h13v-5M8 10l8-8M11 2h5v5" />
          </PopOut>
          <Timer>00:00:22</Timer>
          <ExamLinks>
            <span>Exam Summary</span>
            <span>Restart Project</span>
            <span>Submit Project</span>
          </ExamLinks>
        </ExamTop>
        <ExamMain>
          <LeftCol>
            Project 1 of 7
            <MosLogo />
          </LeftCol>
          <Panel>
            <TaskRow>
              <TaskBtn>ABOUT ME</TaskBtn>
              {tasks.map(([t, grey], i) => (
                <TaskBtn key={t} $icons $current={i === 1}>
                  <TaskIcons><Tick grey={grey} /><Flag /></TaskIcons>
                  {t}
                </TaskBtn>
              ))}
              <TaskBtn>SHOW ME</TaskBtn>
              <TaskBtn>RESULT</TaskBtn>
            </TaskRow>
            <MsgWrap>
              <Msg>
                On the <b>“Order detail</b>" worksheet sort the table to order the records by "<b>Region</b>" field, with orders in "<b>China</b>" coming first and orders from "<b>Taiwan</b>" coming second Then
                <br />
                sort the orders <b>aplabetically</b> (from A to Z) by the "<b>CustomerName</b>" field Finally, sort the orders in <b>ascending</b> order by the "<b>OrderDate</b>" field
              </Msg>
              <MsgScroll>
                <ChevronUp size={22} strokeWidth={2.5} />
                <ChevronDown size={22} strokeWidth={2.5} />
              </MsgScroll>
            </MsgWrap>
          </Panel>
          <InfoCol><Info size={24} strokeWidth={2} /></InfoCol>
        </ExamMain>
        <ExamFoot>
          <Copyright>© 2020 MOS Thủ Đức - Version 1.0.0.0</Copyright>
          <NavBtn $w={118} $gap={2} $pl={0}><ChevronLeft size={28} strokeWidth={1.7} />Previous</NavBtn>
          <NavBtn $w={122} $gap={4} $pl={4}><Tick grey />Mark Complete</NavBtn>
          <NavBtn $w={118} $gap={1} $pl={4}><Flag />Mark Review</NavBtn>
          <NavBtn $w={118} $gap={16} $pl={43}>Next<ChevronRight size={28} strokeWidth={1.7} /></NavBtn>
          <FootRight>
            <HelpLink><HelpBulb />Help</HelpLink>
            <span>Save Project</span>
          </FootRight>
        </ExamFoot>
        <Strip><StripLit /></Strip>
      </Exam>
    </Page>
  );
}
